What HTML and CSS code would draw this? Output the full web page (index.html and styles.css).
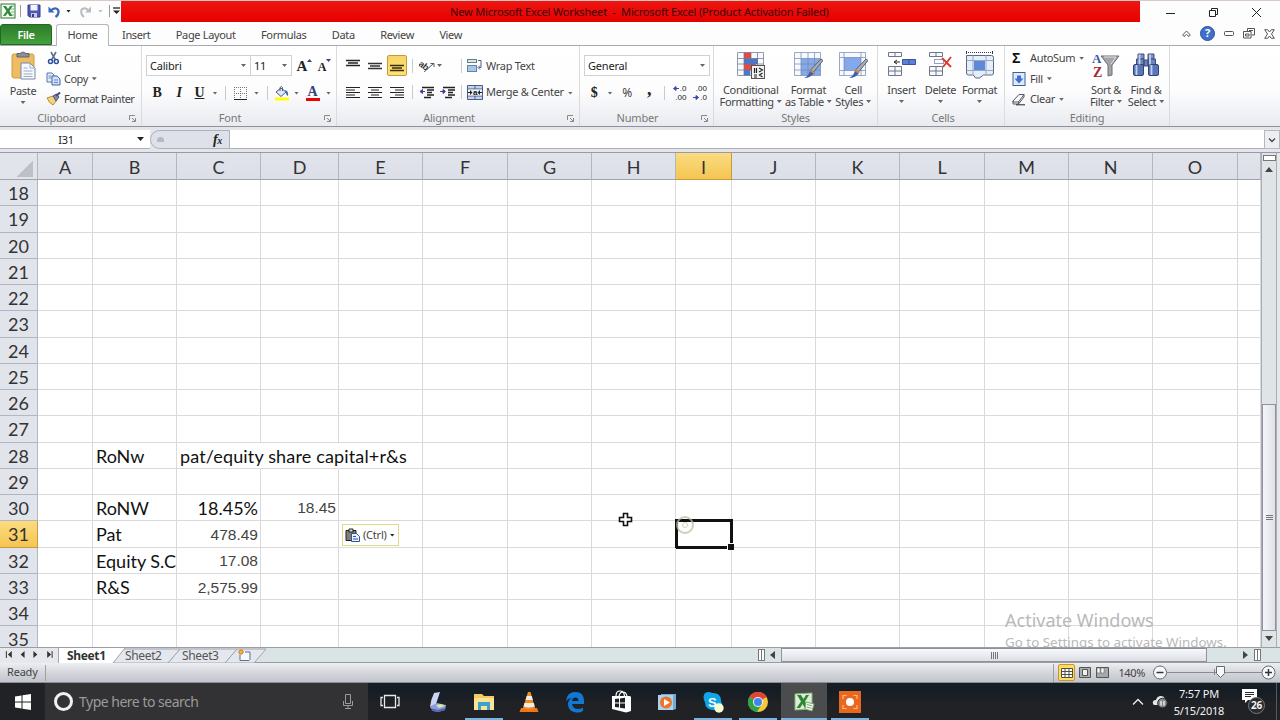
FILE: index.html
```html
<!DOCTYPE html>
<html lang="en">
<head>
    <meta charset="UTF-8">
    <meta name="viewport" content="width=device-width, initial-scale=1.0">
    <title>New Microsoft Excel Worksheet - Microsoft Excel</title>
    <link rel="stylesheet" href="styles.css">
</head>
<body>
    <header class="titlebar">
        <div class="quick-access">
            <svg class="qa-excel" width="16" height="16" viewBox="0 0 16 16"><rect x="1" y="1" width="14" height="14" fill="#f4faf2" stroke="#2c7a35"/><path d="M11 3h3M11 6h3M11 9h3M11 12h3" stroke="#7cb87e"/><path d="M3 3h3l2 3 2-3h2.500L9.500 8l3 5h-3L7.700 10 5.500 13H3l3.500-5z" fill="#2e8b37"/></svg>
            <i class="vline"></i>
            <svg width="14" height="14" viewBox="0 0 14 14"><path d="M1 1h12v12H2.500L1 11.500z" fill="#4d55b5" stroke="#363c8e"/><path d="M3.500 1h7v5.500h-7z" fill="#f2f4fc"/><path d="M4 9h6v4H4z" fill="#c9cbe6"/><path d="M5 10h2v3H5z" fill="#333a80"/></svg>
            <svg class="qa-undo" width="13" height="13" viewBox="0 0 13 13"><path d="M3 5.500C6 2 11 3 10.500 7.500 10.300 9.500 9 11 7.500 12" fill="none" stroke="#3b68bd" stroke-width="2.300"/><path d="M.5 1.500v6h6z" fill="#3b68bd"/></svg>
            <i class="arr dark"></i>
            <svg class="qa-redo" width="13" height="13" viewBox="0 0 13 13"><path d="M9.500 5.500C6 2 2 3 2.200 7 2.300 9.500 3.500 11 5 12" fill="none" stroke="#b9bbc0" stroke-width="2"/><path d="M12 1.500v6H6z" fill="#b9bbc0"/></svg>
            <i class="arr pale"></i>
            <i class="vline"></i>
            <svg width="7" height="8" viewBox="0 0 7 8"><path d="M0 1h7" stroke="#222" stroke-width="1.300"/><path d="M0 3.500h7L3.500 7z" fill="#222"/></svg>
        </div>
        <div class="caption">New Microsoft Excel Worksheet &nbsp;-&nbsp; Microsoft Excel (Product Activation Failed)</div>
        <div class="window-buttons">
            <svg width="11" height="11" viewBox="0 0 11 11"><path d="M1 6.500h9" stroke="#222"/></svg>
            <svg width="11" height="11" viewBox="0 0 11 11"><path d="M1.500 3.500h6v6h-6zM3.500 3V1.500h6v6H8" fill="none" stroke="#222"/></svg>
            <svg width="11" height="11" viewBox="0 0 11 11"><path d="M1 1l9 9M10 1l-9 9" stroke="#222"/></svg>
        </div>
    </header>

    <nav class="tabs">
        <span class="tab file">File</span>
        <span class="tab home">Home</span>
        <span class="tab">Insert</span>
        <span class="tab">Page Layout</span>
        <span class="tab">Formulas</span>
        <span class="tab">Data</span>
        <span class="tab">Review</span>
        <span class="tab">View</span>
        <div class="tab-tools">
            <svg width="9" height="8" viewBox="0 0 9 8"><path d="M.7 5L4.500 1 8.300 5 7 6.500 4.500 4.500 2 6.500z" fill="#fff" stroke="#555"/></svg>
            <div class="help">?</div>
            <svg width="10" height="5" viewBox="0 0 10 5"><rect x=".5" y=".5" width="9" height="4" rx="1" fill="#fff" stroke="#555"/></svg>
            <svg width="12" height="11" viewBox="0 0 12 11"><path d="M4.500 3V.500h7v6.500H8.500" fill="none" stroke="#555"/><path d="M6 2.500h4M.500 3.500h7.500v6.500H.500zM2.500 6h3.500v2H2.500z" fill="none" stroke="#555"/></svg>
            <svg width="11" height="10" viewBox="0 0 11 10"><path d="M.7.700h3L5.500 3 7.300.700h3L7.500 5l2.800 4.300h-3L5.500 7 3.700 9.300h-3L3.500 5z" fill="#fff" stroke="#555"/></svg>
        </div>
    </nav>

    <section class="ribbon">
        <div class="group clipboard">
            <div class="group-body">
                <div class="big paste">
                    <svg width="25" height="29" viewBox="0 0 25 29"><rect x="1" y="3" width="22" height="24" rx="2" fill="#eebd63" stroke="#d09a3f"/><path d="M6 2.500h3Q12-.500 15 2.500h3V6H6z" fill="#8c8f98" stroke="#62656d"/><path d="M10 12h9l5 5v11H10z" fill="#f6f9fe" stroke="#7988a8"/><path d="M19 12v5h5M12.500 17h4M12.500 20h9M12.500 23h9M12.500 25.500h9" fill="none" stroke="#9aabc9"/></svg>
                    <span>Paste</span><i class="arr"></i>
                </div>
                <div class="stack">
                    <div><svg width="15" height="14" viewBox="0 0 15 14"><path d="M5 1l4.500 8M10 1L5.500 9" stroke="#5c6f96" stroke-width="1.600"/><circle cx="4.500" cy="10.500" r="2" fill="none" stroke="#2c4e9c" stroke-width="1.500"/><circle cx="10.300" cy="10.500" r="2" fill="none" stroke="#2c4e9c" stroke-width="1.500"/></svg>Cut</div>
                    <div><svg width="15" height="14" viewBox="0 0 15 14"><path d="M1 1h5l2 2v7H1z" fill="#e6effc" stroke="#5375b5"/><path d="M6 4h5l3 3v6H6z" fill="#d4e3fa" stroke="#3f62a8"/><path d="M2.500 4h3M2.500 6h3M8 8h4M8 10.500h4" stroke="#6487c4"/></svg>Copy<i class="arr"></i></div>
                    <div><svg width="15" height="14" viewBox="0 0 15 14"><path d="M1 6l6-2 4 4-4 5q-4-2-6-7z" fill="#f2d57d" stroke="#b78b38"/><path d="M7 4l3 5 3-4-2.500-3z" fill="#8890a8" stroke="#4b5370"/><path d="M10 4l4-3.500" stroke="#414b7a" stroke-width="2"/></svg>Format Painter</div>
                </div>
            </div>
            <div class="group-name">Clipboard<svg class="launcher" width="7" height="7" viewBox="0 0 7 7"><path d="M.5 5V.500H6M3 3l3 3M6.500 3v3.500H3" fill="none" stroke="#888"/></svg></div>
        </div>

        <div class="group font">
            <div class="group-body rows">
                <div class="line1">
                    <div class="combo">Calibri<i class="arr"></i></div>
                    <div class="combo size">11<i class="arr"></i></div>
                    <div class="serif grow">A<svg width="5" height="4" viewBox="0 0 5 4"><path d="M0 3h5L2.500 0z" fill="#34427a"/></svg></div>
                    <div class="serif shrink">A<svg width="5" height="4" viewBox="0 0 5 4"><path d="M0 0h5L2.500 3z" fill="#34427a"/></svg></div>
                </div>
                <div class="line2">
                    <b class="serif">B</b><b class="serif italic">I</b><b class="serif under">U</b><i class="arr"></i><i class="vline"></i>
                    <svg width="13" height="13" viewBox="0 0 13 13"><path d="M.5 0v12M6.500 0v12M12.500 0v12M0 .500h13M0 6.500h13" stroke="#777" stroke-dasharray="1 1"/><path d="M0 12.500h13" stroke="#222"/></svg>
                    <i class="arr"></i><i class="vline"></i>
                    <svg width="16" height="15" viewBox="0 0 16 15"><path d="M2 6l5-4 5 4-5 4.500z" fill="#dfe8f5" stroke="#4a5a80"/><path d="M6 5V1.500q1.500-2 2.500 0V5" fill="none" stroke="#4a5a80"/><path d="M11 4q4 1 3 6-2-1-2.500-4z" fill="#3f6bbd"/><path d="M1 11.500h14v3H1z" fill="#ff0"/></svg>
                    <i class="arr"></i>
                    <div class="fontcolor serif">A</div>
                    <i class="arr"></i>
                </div>
            </div>
            <div class="group-name">Font<svg class="launcher" width="7" height="7" viewBox="0 0 7 7"><path d="M.5 5V.500H6M3 3l3 3M6.500 3v3.500H3" fill="none" stroke="#888"/></svg></div>
        </div>

        <div class="group alignment">
            <div class="group-body rows">
                <div class="line">
                    <svg width="14" height="13" viewBox="0 0 14 13"><path d="M0 1.500h14M2 4h10M0 6.500h14" stroke="#222" stroke-width="1.300"/></svg>
                    <svg width="14" height="13" viewBox="0 0 14 13"><path d="M0 4.500h14M2 7h10M0 9.500h14" stroke="#333" stroke-width="1.300"/></svg>
                    <div class="pressed"><svg width="14" height="13" viewBox="0 0 14 13"><path d="M0 6.500h14M2 9h10M0 11.500h14" stroke="#3b2f0a" stroke-width="1.400"/></svg></div>
                    <i class="vline"></i>
                    <svg width="16" height="14" viewBox="0 0 16 14"><text x="0" y="9" transform="rotate(38 4 6)" class="ab">ab</text><path d="M5 13l9-8M11.500 4.500H15V8" fill="none" stroke="#555"/></svg>
                    <i class="arr left"></i>
                    <i class="vline"></i>
                    <svg width="16" height="15" viewBox="0 0 16 15"><rect x=".5" y="1.500" width="9" height="3" fill="#dbe5ef" stroke="#687c88"/><path d="M11 2.500h3v7h-2M13 7.500l-2 2 2 2" fill="none" stroke="#49608c"/><rect x=".5" y="7.500" width="9" height="6" fill="#a9c8e8" stroke="#6384a5"/></svg>
                    <span>Wrap Text</span>
                </div>
                <div class="line">
                    <svg width="14" height="13" viewBox="0 0 14 13"><path d="M0 1.500h14M0 4h9M0 6.500h14M0 9h9M0 11.500h14" stroke="#222" stroke-width="1.200"/></svg>
                    <svg width="14" height="13" viewBox="0 0 14 13"><path d="M0 1.500h14M3 4h8M0 6.500h14M3 9h8M0 11.500h14" stroke="#222" stroke-width="1.200"/></svg>
                    <svg width="14" height="13" viewBox="0 0 14 13"><path d="M0 1.500h14M5 4h9M0 6.500h14M5 9h9M0 11.500h14" stroke="#222" stroke-width="1.200"/></svg>
                    <i class="vline"></i>
                    <svg width="15" height="13" viewBox="0 0 15 13"><path d="M3 1.500h12M8 4h7M8 6.500h5M8 9h7M5 11.500h7" stroke="#222" stroke-width="1.300"/><path d="M6 5.500H2M3.500 3.500L1 5.500l2.500 2z" stroke="#3f3f9e" fill="#3f3f9e"/></svg>
                    <svg width="15" height="13" viewBox="0 0 15 13"><path d="M3 1.500h12M8 4h7M8 6.500h5M8 9h7M5 11.500h7" stroke="#222" stroke-width="1.300"/><path d="M0 5.500h4M3 3.500l2.500 2-2.500 2z" stroke="#3f3f9e" fill="#3f3f9e"/></svg>
                    <i class="vline"></i>
                    <svg width="16" height="15" viewBox="0 0 16 15"><path d="M.5.500h15v14H.500zM8 .500V4M8 11v3.500M.500 4h15M.500 11h15" fill="#c4d4ee" stroke="#4a5d86"/><path d="M1 4.500h14v6H1z" fill="#eef3fb"/><path d="M1 7.500h3.500M15 7.500h-3.500" stroke="#222"/><path d="M3 5l2.500 2.500L3 10zM13 5l-2.500 2.500L13 10z" fill="#222"/><text x="6" y="10" class="tiny-a">a</text></svg>
                    <span>Merge &amp; Center<i class="arr"></i></span>
                </div>
            </div>
            <div class="group-name">Alignment<svg class="launcher" width="7" height="7" viewBox="0 0 7 7"><path d="M.5 5V.500H6M3 3l3 3M6.500 3v3.500H3" fill="none" stroke="#888"/></svg></div>
        </div>

        <div class="group number">
            <div class="group-body rows">
                <div class="combo">General<i class="arr"></i></div>
                <div class="line">
                    <b class="serif">$</b><i class="arr"></i><span class="pct">%</span><b class="serif comma">,</b><i class="vline"></i>
                    <div class="dec"><span><svg width="6" height="5" viewBox="0 0 6 5"><path d="M6 2.500H2M3 .500L.500 2.500 3 4.500z" fill="#3b48a8" stroke="#3b48a8"/></svg>.0</span><span>.00</span></div>
                    <div class="dec"><span>.00</span><span><svg width="6" height="5" viewBox="0 0 6 5"><path d="M0 2.500h4M3 .500l2.500 2L3 4.500z" fill="#3b48a8" stroke="#3b48a8"/></svg>.0</span></div>
                </div>
            </div>
            <div class="group-name">Number<svg class="launcher" width="7" height="7" viewBox="0 0 7 7"><path d="M.5 5V.500H6M3 3l3 3M6.500 3v3.500H3" fill="none" stroke="#888"/></svg></div>
        </div>

        <div class="group styles">
            <div class="group-body">
                <div class="big w71">
                    <svg width="29" height="28" viewBox="0 0 29 28"><path d="M1.500 1.500h26v23h-26z" fill="#f7f9fd"/><path d="M8 1.500h7v6H8zM8 13h12v6H8z" fill="#e8493c"/><path d="M8 7.500h14V13H8z" fill="#4f74cc"/><path d="M8 19h6v5.500H8z" fill="#4f74cc"/><path d="M1.500 1.500h26v23h-26zM8 1.500v23M15 1.500v23M21.500 1.500v23M1.500 7.500h26M1.500 13h26M1.500 19h26" fill="none" stroke="#67738c" stroke-opacity=".7"/><rect x="15.500" y="14.500" width="13" height="13" fill="#f4f4f4" stroke="#555"/><path d="M18 24h3M18 26h3M18.500 17v5M20.500 17v5M23 17l3.500 2-3.500 2M26.500 22l-3 2 3 2" fill="none" stroke="#222" stroke-width="1.200"/></svg>
                    <span>Conditional</span><span>Formatting<i class="arr"></i></span>
                </div>
                <div class="big w44">
                    <svg width="30" height="28" viewBox="0 0 30 28"><path d="M1.500 1.500h26v23h-26z" fill="#f7f9fd"/><path d="M8 7.500h19.500v17H8z" fill="#86a9e8"/><path d="M1.500 1.500h26v23h-26zM8 1.500v23M15 1.500v23M21.500 1.500v23M1.500 7.500h26M1.500 13h26M1.500 19h26" fill="none" stroke="#7188b2" stroke-opacity=".7"/><path d="M28 8l2 1.500L20.500 21l-3-2z" fill="#a9adb8" stroke="#596070"/><path d="M17 19l4 3q-3 5-10 5 5-2 6-8z" fill="#3a62b3"/><path d="M17 19l4 3" stroke="#c98a3a" stroke-width="2"/></svg>
                    <span>Format</span><span>as Table<i class="arr"></i></span>
                </div>
                <div class="big w48">
                    <svg width="30" height="28" viewBox="0 0 30 28"><path d="M1.500 1.500h26v23h-26z" fill="#f7f9fd"/><path d="M6 6.500h17v13H6z" fill="#84a8ec"/><path d="M1.500 1.500h26v23h-26zM6 1.500v23M23 1.500v23M1.500 6.500h26M1.500 19.500h26" fill="none" stroke="#7188b2" stroke-opacity=".7"/><path d="M28 8l2 1.500L20.500 21l-3-2z" fill="#a9adb8" stroke="#596070"/><path d="M17 19l4 3q-3 5-10 5 5-2 6-8z" fill="#3a62b3"/><path d="M17 19l4 3" stroke="#c98a3a" stroke-width="2"/></svg>
                    <span>Cell</span><span>Styles<i class="arr"></i></span>
                </div>
            </div>
            <div class="group-name">Styles</div>
        </div>

        <div class="group cells">
            <div class="group-body">
                <div class="big w39">
                    <svg width="29" height="28" viewBox="0 0 29 28"><path d="M1.500 1.500h13v4h-13zM8 1.500v4M1.500 15.500h13v9h-13zM8 15.500v9M1.500 20h13" fill="#f7f9fd" stroke="#6d7788"/><path d="M15.500 8.500h13v5h-13zM22 8.500v5" fill="#5c80d8" stroke="#3c539a"/><path d="M13 11H8M10 9l-3 2 3 2" fill="none" stroke="#222"/></svg>
                    <span>Insert</span><i class="arr"></i>
                </div>
                <div class="big w39">
                    <svg width="25" height="28" viewBox="0 0 25 28"><path d="M1.500 1.500h13v4h-13zM8 1.500v4M1.500 15.500h13v9h-13zM8 15.500v9M1.500 20h13" fill="#f7f9fd" stroke="#6d7788"/><path d="M6.500 8.500h9v4h-9z" fill="none" stroke="#333f88" stroke-dasharray="1 1"/><path d="M14 7l9 9M23 6l-8 10" stroke="#e33a35" stroke-width="2"/></svg>
                    <span>Delete</span><i class="arr"></i>
                </div>
                <div class="big w39">
                    <svg width="29" height="28" viewBox="0 0 29 28"><path d="M1 1.500h27" stroke="#334" stroke-dasharray="1 1"/><path d="M1.500 0v3M27.500 0v3" stroke="#334"/><path d="M1.500 4.500h25q2 0 2 2V22q0 2-2 2h-8l-4 3h-4l-2-3h-5q-2 0-2-2z" fill="#e4edfa" stroke="#5a6a83"/><path d="M8 4.500v19M21 4.500v19M1.500 9.500h27M1.500 19.500h27" stroke="#9aa8bd"/><path d="M9 10h11v9H9z" fill="#5d89dd"/></svg>
                    <span>Format</span><i class="arr"></i>
                </div>
            </div>
            <div class="group-name">Cells</div>
        </div>

        <div class="group editing">
            <div class="group-body">
                <div class="stack">
                    <div><b class="sigma">&Sigma;</b>AutoSum<i class="arr"></i></div>
                    <div><svg width="13" height="14" viewBox="0 0 13 14"><rect x=".5" y=".5" width="12" height="13" fill="#dfeafa" stroke="#45608f"/><path d="M4.500 3.500h4v3h2.500l-4.500 5-4.500-5h2.500z" fill="#3d6fd6"/></svg>Fill<i class="arr"></i></div>
                    <div><svg width="14" height="13" viewBox="0 0 14 13"><path d="M1 8l6-6.500h5L6.500 9H1zM1 8v3h5.500L12 4V1.500M6.500 9v2" fill="#f3f3f8" stroke="#565b6a"/><path d="M4 11.800h9" stroke="#222"/></svg>Clear<i class="arr"></i></div>
                </div>
                <div class="big sort">
                    <svg width="28" height="28" viewBox="0 0 28 28"><path d="M9 5h18l-7 9v10l-4 1V14z" fill="#a3a5aa" stroke="#6c6e73"/><path d="M12 6h12l-5 7" fill="none" stroke="#e2e3e5"/><text x="0" y="12" class="sort-a">A</text><text x="1" y="26" class="sort-z">Z</text></svg>
                    <span>Sort &amp;</span><span>Filter<i class="arr"></i></span>
                </div>
                <div class="big find">
                    <svg width="28" height="28" viewBox="0 0 28 28"><path d="M6 3h6v5H6zM16 3h6v5h-6z" fill="#7d93c3" stroke="#3c4c78"/><path d="M4.500 8h7.500v6H4.500zM16 8h7.500v6H16zM12 9h4v6h-4z" fill="#6b84bb" stroke="#3c4c78"/><rect x="1.500" y="13.500" width="10" height="11" rx="1.500" fill="#5877b8" stroke="#33436f"/><rect x="16.500" y="13.500" width="10" height="11" rx="1.500" fill="#5877b8" stroke="#33436f"/><path d="M4.500 14v10M19.500 14v10M7.500 3.500v10M18 3.500v10" stroke="#c3d1ef" stroke-width="1.800"/></svg>
                    <span>Find &amp;</span><span>Select<i class="arr"></i></span>
                </div>
            </div>
            <div class="group-name">Editing</div>
        </div>
    </section>

    <div class="formula-bar">
        <div class="name-box"><span>I31</span><i class="arr dark"></i></div>
        <div class="fx"><i class="knob"></i><b>f<small>x</small></b></div>
        <div class="formula-input"></div>
        <div class="expand"><svg width="8" height="6" viewBox="0 0 8 6"><path d="M1 1.500l3 3 3-3" fill="none" stroke="#444" stroke-width="1.300"/></svg></div>
    </div>

    <main class="workspace">
        <div class="sheet" id="sheet"></div>
        <div class="vscroll">
            <div class="split"></div>
            <i class="tri up"></i>
            <div class="vtrack"></div>
            <div class="vthumb"><i></i><i></i><i></i></div>
            <i class="tri down"></i>
        </div>
        <div class="edge"></div>

        <div class="paste-options">
            <svg width="15" height="14" viewBox="0 0 15 14"><path d="M1 2.500h10v10H1z" fill="#7f7f72" stroke="#222"/><path d="M4 1h4v3H4z" fill="#ddd" stroke="#222"/><path d="M6.500 5.500h5l3 3v5h-8z" fill="#e7effd" stroke="#2f55a4"/><path d="M8 8.500h3M8 11h5" stroke="#2f55a4"/></svg>
            (Ctrl)<i class="arr dark"></i>
        </div>
        <svg class="pointer" width="16" height="16" viewBox="0 0 16 16"><path d="M5.500 1.500h4v4h4v4h-4v4h-4v-4h-4v-4h4z" fill="#fff" stroke="#111" stroke-width="1.600"/></svg>
        <div class="click-ring"><i></i></div>
        <div class="watermark">
            <p class="wm-title">Activate Windows</p>
            <p class="wm-text">Go to Settings to activate Windows.</p>
        </div>
    </main>

    <div class="sheet-tabs">
        <svg class="nav-arrows" width="59" height="15" viewBox="0 0 59 15"><path d="M6.500 3v7M53 3v7" stroke="#333"/><path d="M12 3v7L8 6.500zM25 3v7l-4-3.500zM34 3v7l4-3.500zM48 3v7l4-3.500z" fill="#333"/></svg>
        <svg class="tab-shapes" width="210" height="16" viewBox="0 0 210 16"><path d="M166 15l12-14h29l-12 14z" fill="#e4e7ee" stroke="#a2a6b0"/><path d="M109 15l12-14h57l-12 14z" fill="#e4e7ee" stroke="#a2a6b0"/><path d="M53 15L65 1h56l-12 14z" fill="#e4e7ee" stroke="#a2a6b0"/><path d="M0 0h66L54 15H0z" fill="#fff"/><path d="M66 0L54 15" stroke="#a2a6b0"/><text x="8" y="12" class="st active">Sheet1</text><text x="66" y="12" class="st">Sheet2</text><text x="123" y="12" class="st">Sheet3</text><path d="M181 6.500v6h9l1-1V4h-5" fill="#f7f8fc" stroke="#5f6d9b"/><circle cx="182" cy="4" r="2.200" fill="#f6b53c" stroke="#d07d22"/></svg>
        <div class="tabs-fill"></div>
        <div class="split-v"></div>
        <div class="hscroll">
            <i class="tri lft"></i>
            <div class="hthumb"><i></i><i></i><i></i><i></i></div>
            <div class="htrack"></div>
            <i class="tri rgt"></i>
        </div>
        <div class="split-v"></div>
        <div class="corner"></div>
    </div>

    <div class="status-bar">
        <span class="ready">Ready</span>
        <div class="view-buttons">
            <div class="view on"><svg width="12" height="10" viewBox="0 0 12 10"><path d="M.5.500h11v9H.500zM4 0v10M8 0v10M0 3.500h12M0 6.500h12" fill="#fff" stroke="#54503f"/></svg></div>
            <div class="view"><svg width="12" height="11" viewBox="0 0 12 11"><path d="M.5.500h11v10H.500z" fill="#aab1ac" stroke="#555"/><path d="M3.500 2.500h5v6h-5z" fill="#f0f3ee" stroke="#555"/></svg></div>
            <div class="view"><svg width="13" height="11" viewBox="0 0 13 11"><path d="M.5.500h12v10H.500z" fill="#a6a8ab" stroke="#555"/><path d="M1 1h3v5H1zM5 1h3v5H5z" fill="#fff" stroke="#666" stroke-width=".6"/></svg></div>
        </div>
        <span class="zoom-value">140%</span>
        <svg class="zoom-slider" width="125" height="18" viewBox="0 0 125 18"><path d="M15 8.500h95" stroke="#878b96"/><path d="M62.500 5v6" stroke="#878b96"/><circle cx="8" cy="8.500" r="6.500" fill="#f7f8fa" stroke="#666a75"/><circle cx="116.500" cy="8.500" r="6.500" fill="#f7f8fa" stroke="#666a75"/><path d="M4.500 8.500h7M113 8.500h7M116.500 5v7" stroke="#333" stroke-width="1.500"/><path d="M64.500 2.500h8v7l-4 4-4-4z" fill="#f7f8fa" stroke="#666a75"/></svg>
    </div>

    <footer class="taskbar">
        <div class="start"><svg width="16" height="16" viewBox="0 0 16 16"><path d="M0 2.500l6.500-1v6H0zM7.500 1.300L16 0v7.500H7.500zM0 8.500h6.500v6l-6.500-1zM7.500 8.500H16V16l-8.500-1.300z" fill="#fff"/></svg></div>
        <div class="search">
            <i class="cortana"></i><span>Type here to search</span>
            <svg width="12" height="17" viewBox="0 0 12 17"><path d="M3.500 1.500h5v9h-5zM1.500 8v4.500h9V8M6 12.500V16M3 15.500h6" fill="none" stroke="#9b9b9b"/></svg>
        </div>
        <div class="task view-task"><svg width="20" height="16" viewBox="0 0 20 16"><path d="M4.500 1.500h11v12h-11zM3 3.500H1v8h2M17 3.500h2v8h-2" fill="none" stroke="#e8e8e8" stroke-width="1.300"/></svg></div>
        <div class="task"><svg width="20" height="22" viewBox="0 0 20 22"><path d="M6 2l6-1-4 12-6 3q1-8 4-14z" fill="#c9d5f3"/><path d="M2 16l7-4 9 2-1 5-7 2-5-1z" fill="#8b9fdf"/><path d="M8 14l5-1 4 2-6 2z" fill="#dbe6a8"/><path d="M4 18.500l6 1.500 7-2" fill="none" stroke="#5368b3" stroke-width="2"/></svg></div>
        <div class="task run"><svg width="20" height="18" viewBox="0 0 20 18"><path d="M0 1h8l2 2h10v14H0z" fill="#f1ca62"/><path d="M0 5h20v12H0z" fill="#fae491"/><path d="M4 17V9h12v8h-3v-4H7v4z" fill="#3aa2d2"/></svg></div>
        <div class="task"><svg width="20" height="22" viewBox="0 0 20 22"><path d="M2 17h16l1.500 4H.500z" fill="#ef7814"/><path d="M9 1h2.500L16 17q-5.500 3-12 0z" fill="#f78b1c"/><path d="M7.800 5h5l1 4H6.500zM5.500 12h9.300l1 3.500q-6 2-11.300 0z" fill="#eee"/></svg></div>
        <div class="task"><svg width="20" height="22" viewBox="0 0 20 22"><path d="M1 10Q2 1 10.500 1 19 1 19 10v3H7q1 5 6 5 3 0 5-1.500V20q-3 2-7 1.500-8-1-8-8.500 0-4 4.500-6.500Q3.500 7 1 10zm6-0h6.500q0-3.500-3-3.500T7 10z" fill="#1179d4"/></svg></div>
        <div class="task"><svg width="21" height="23" viewBox="0 0 21 23"><path d="M5 6q0-5 4-5t4.500 5M8 6q1-4 4-4t4 4" fill="none" stroke="#fff" stroke-width="1.200"/><path d="M1 6h18l1 1v14l-5 1.500L1 19z" fill="#fff"/><path d="M4 9l4-.5v4H4zM9 8.400l5-.6v4.700H9zM4 13.500h4v4l-4-.5zM9 13.500h5v5l-5-.8z" fill="#1f2022"/></svg></div>
        <div class="task"><svg width="20" height="20" viewBox="0 0 20 20"><path d="M4 2h15v15l-3 1H4z" fill="#75a9d4"/><path d="M1 3h15v15H1z" fill="#acd2ec"/><circle cx="9" cy="10.500" r="6" fill="#ee7328"/><path d="M7 7l6 3.500-6 3.500z" fill="#fff"/></svg></div>
        <div class="task run"><svg width="22" height="22" viewBox="0 0 22 22"><path d="M3 2q4-2 7 0 9-.5 9 8 2 4 0 8-3 3-7 1Q3 19 3 11 0 6 3 2z" fill="#10a5e8"/><text x="6" y="15.500" class="skype-s">S</text><circle cx="17" cy="17" r="4.700" fill="#f4ffd2"/></svg></div>
        <div class="task run"><svg width="22" height="22" viewBox="0 0 22 22"><circle cx="11" cy="11" r="10" fill="#f6c83a"/><path d="M11 11L2.300 6A10 10 0 0 1 19.700 6z" fill="#e04537"/><path d="M11 11L2.300 6A10 10 0 0 0 10 21l5-8z" fill="#2da34c"/><circle cx="11" cy="11" r="5" fill="#f5f5f5"/><circle cx="11" cy="11" r="4" fill="#4285e8"/></svg></div>
        <div class="task run current"><svg width="21" height="20" viewBox="0 0 21 20"><path d="M1 2l17-1v16L1 18z" fill="#dcefd4" stroke="#8bb57e"/><path d="M3 3h4l2.500 4L12 3h3l-4 6.500 4 6.500h-4l-2.500-4L6 16H2.500L7 9.500z" fill="#2c8634"/><path d="M12 10l8 2-2 7-7-2z" fill="#f4f9f0" stroke="#79a66c"/><path d="M13 12.500l5 1.300M12.500 15l5 1.300" stroke="#79a66c"/></svg></div>
        <div class="task run"><svg width="22" height="22" viewBox="0 0 22 22"><path d="M0 0h22v22H0z" fill="#e9671f"/><circle cx="11" cy="11" r="4" fill="#fff"/><path d="M4 8V4.500h3.500M14.500 4.500H18V8M4 14v3.500h3.500M14.500 17.500H18V14" fill="none" stroke="#ffb98a" stroke-width="1.200"/></svg></div>
        <div class="tray">
            <svg class="chev" width="12" height="8" viewBox="0 0 12 8"><path d="M1 6.500l5-5 5 5" fill="none" stroke="#eee" stroke-width="1.300"/></svg>
            <svg width="16" height="15" viewBox="0 0 16 15"><path d="M1 10q-1-4 3-4 1-4 5-4 3 0 4 3v6H2z" fill="#e6e6e6"/><circle cx="10.500" cy="9" r="4.800" fill="#86888b" stroke="#2a2b2e"/><path d="M9 7v4.500M12 7v4.500" stroke="#fff" stroke-width="1.200"/></svg>
            <div class="clock"><span>7:57 PM</span><span>5/15/2018</span></div>
            <div class="notify"><svg width="15" height="15" viewBox="0 0 15 15"><path d="M0 0h15v11H6l-3 3v-3H0z" fill="#fff"/><path d="M3 3.500h9M3 5.500h9M3 7.500h6" stroke="#26282c"/></svg><span class="badge">26</span></div>
            <i class="peek"></i>
        </div>
    </footer>

    <script>
    // the last column has no room for its letter
    const columns = 'ABCDEFGHIJKLMNO'.split('').concat('');
    const firstRow = 18;
    const lastRow = 35;
    const selected = { col: 'I', row: 31 };

    const values = {
        B28: ['RoNw'], C28: ['pat/equity share capital+r&s', 'wide'],
        B30: ['RoNW'], C30: ['18.45%', 'num'], D30: ['18.45', 'num arial'],
        B31: ['Pat'], C31: ['478.49', 'num arial low'],
        B32: ['Equity S.C'], C32: ['17.08', 'num arial'],
        B33: ['R&S'], C33: ['2,575.99', 'num arial low']
    };

    const sheet = document.getElementById('sheet');

    function add(className, text) {
        const el = document.createElement('div');
        el.className = className;
        if (text) {
            const span = document.createElement('span');
            span.textContent = text;
            el.appendChild(span);
        }
        sheet.appendChild(el);
    }

    add('head select-all');
    columns.forEach(col => add('head' + (col === selected.col ? ' hot' : ''), col));

    for (let row = firstRow; row <= lastRow; row++) {
        add('head row-head' + (row === selected.row ? ' hot' : ''), String(row));
        columns.forEach(col => {
            const value = values[col + row] || [];
            let className = 'cell';
            if (value[1]) className += ' ' + value[1];
            if (col === selected.col && row === selected.row) className += ' selected';
            // long text spills over the next empty cells
            if (row === 28 && (col === 'C' || col === 'D')) className += ' spill';
            add(className, value[0]);
        });
    }
    </script>
</body>
</html>
```
FILE: styles.css
```css
* {
    box-sizing: border-box;
}
body {
    margin: 0;
    width: 1280px;
    height: 720px;
    overflow: hidden;
    display: flex;
    flex-direction: column;
    background: #fff;
    color: #444;
    font-family: "Noto Sans", "Open Sans", sans-serif;
    font-size: 11px;
    letter-spacing: -0.35px;
    line-height: 12px;
    white-space: nowrap;
}
svg {
    display: block;
    flex: none;
}
.arr {
    display: inline-block;
    flex: none;
    width: 5px;
    height: 3px;
    background: #666;
    clip-path: polygon(0 0, 100% 0, 50% 100%);
}
.arr.dark {
    background: #222;
}
.arr.pale {
    background: #bbb;
}
.vline {
    width: 1px;
    height: 14px;
    background: #c9cacd;
}
.serif {
    font-family: "Liberation Serif", serif;
    color: #222;
}

/* title bar */
.titlebar {
    height: 24px;
    flex: none;
    display: flex;
    background: #fdfdfd;
    border-top: 1px solid #d9caca;
}
.quick-access {
    width: 121px;
    display: flex;
    align-items: center;
    padding-bottom: 3px;
}
.quick-access .vline {
    margin: 0 6px 0 4px;
    height: 12px;
    background: #999;
}
.quick-access .qa-undo {
    margin: 0 5px 0 7px;
}
.quick-access .qa-redo {
    margin: 0 6px 0 8px;
}
.quick-access .pale + .vline {
    margin: 0 3px 0 6px;
}
.caption {
    width: 1019px;
    height: 21px;
    padding: 5px 0 0 329px;
    background: linear-gradient(#ee1610, #e60000);
    color: #3b0808;
    letter-spacing: -0.17px;
}
.window-buttons {
    display: flex;
    gap: 32px;
    padding: 6px 0 0 25px;
}

/* ribbon tabs */
.tabs {
    height: 22px;
    flex: none;
    display: flex;
    border-bottom: 1px solid #a8aab0;
    background: #fdfdfd;
}
.tab {
    margin-right: 25.4px;
    padding-top: 5px;
}
.tab.file {
    width: 52px;
    margin-right: 4px;
    text-align: center;
    color: #fff;
    background: linear-gradient(#2c7c2a, #44a13c);
    border: 1px solid #1f6a20;
    border-radius: 3px 3px 0 0;
    padding-top: 4px;
    font-weight: 600;
}
.tab.home {
    width: 53px;
    height: 22px;
    margin-right: 13px;
    text-align: center;
    background: #fff;
    border: 1px solid #b5b7bc;
    border-bottom: 0;
    border-radius: 3px 3px 0 0;
    padding-top: 4px;
}
.tab-tools {
    margin-left: auto;
    display: flex;
    align-items: center;
    gap: 9px;
    padding: 0 5px 2px 0;
}
.help {
    width: 15px;
    height: 15px;
    border-radius: 50%;
    background: #3f6fca;
    border: 1px solid #2b529e;
    color: #fff;
    font-weight: bold;
    text-align: center;
}

/* ribbon */
.ribbon {
    height: 81px;
    flex: none;
    display: flex;
    background: linear-gradient(#fff, #fdfdfe 55%, #e9ebf0);
    border-bottom: 1px solid #8f9299;
}
.group {
    display: flex;
    flex-direction: column;
    border-right: 1px solid #d9dbdf;
}
.group-body {
    height: 66px;
    display: flex;
}
.group-name {
    position: relative;
    color: #777;
    text-align: center;
    letter-spacing: -0.2px;
}
.clipboard .group-name,
.font .group-name,
.alignment .group-name,
.number .group-name {
    padding-right: 18px;
}
.launcher {
    position: absolute;
    right: 5px;
    top: 3px;
}
.big {
    display: flex;
    flex-direction: column;
    align-items: center;
    padding-top: 5px;
}
.big svg {
    margin-bottom: 5px;
}
.big > .arr {
    margin-top: 4px;
}
.big span .arr {
    margin: 0 0 3px 3px;
}
.stack {
    padding-top: 2px;
}
.stack > div {
    height: 20.5px;
    display: flex;
    align-items: center;
}
.stack svg {
    margin-right: 3px;
}
.clipboard .stack {
    letter-spacing: -0.5px;
}
.stack .arr,
.line span .arr {
    margin-left: 4px;
}
.rows {
    flex-direction: column;
}
.combo {
    height: 21px;
    display: flex;
    align-items: center;
    justify-content: space-between;
    padding: 0 4px 0 3px;
    background: #fff;
    border: 1px solid #cfd1d5;
    color: #222;
    letter-spacing: -0.2px;
}
.clipboard {
    width: 142px;
}
.paste {
    width: 46px;
}
.font {
    width: 195px;
}
.font .rows,
.number .rows {
    padding: 9px 0 0 4px;
    gap: 7px;
}
.line1 {
    height: 21px;
    display: grid;
    grid-template-columns: 105px 41px 20px 19px;
}
.combo.size {
    border-left: 0;
}
.grow,
.shrink {
    display: flex;
    justify-content: flex-end;
    align-items: flex-start;
    font-weight: bold;
    font-size: 15px;
    line-height: 22px;
}
.shrink {
    font-size: 12px;
    line-height: 24px;
}
.grow svg,
.shrink svg {
    margin-top: 4px;
}
.line2 {
    height: 20px;
    display: grid;
    grid-template-columns: 22px 22px 19px 12px 8px 22px 11px 10px 19px 11px 21px 11px;
    align-items: center;
    justify-items: center;
}
.line2 b {
    font-size: 14px;
}
.italic {
    font-style: italic;
}
.under {
    text-decoration: underline;
}
.fontcolor {
    width: 14px;
    height: 15px;
    border-bottom: 3px solid #f00000;
    color: #34427a;
    font-weight: bold;
    font-size: 14px;
    line-height: 11px;
    text-align: center;
}
.alignment {
    width: 243px;
}
.alignment .rows {
    padding: 9px 0 0 5px;
    gap: 7px;
}
.alignment .line {
    height: 20px;
    display: grid;
    grid-template-columns: 22px 22px 22px 8px 21px 21px 6px 22px auto;
    align-items: center;
    justify-items: center;
    justify-content: start;
}
.alignment .line .left {
    justify-self: start;
}
.alignment .line span {
    justify-self: start;
    letter-spacing: -0.3px;
}
.line span .arr {
    vertical-align: middle;
}
.pressed {
    width: 20px;
    height: 21px;
    display: flex;
    align-items: center;
    justify-content: center;
    border: 1px solid #c59a35;
    border-radius: 2px;
    background: linear-gradient(#f9d567, #fbe07b);
}
.ab {
    font: bold 9px "Liberation Sans", sans-serif;
    fill: #333;
}
.tiny-a {
    font: bold 8px "Liberation Sans", sans-serif;
    fill: #111;
}
.number {
    width: 134px;
}
.number .combo {
    width: 126px;
}
.number .line {
    height: 20px;
    display: grid;
    grid-template-columns: 20px 12px 22px 22px 8px 23px 18px;
    align-items: center;
    justify-items: center;
}
.number .serif {
    font-size: 14px;
}
.number .comma {
    font-size: 18px;
    line-height: 8px;
    padding-bottom: 8px;
}
.pct {
    font-size: 12px;
}
.dec {
    display: flex;
    flex-direction: column;
    align-items: flex-end;
    font-family: "Liberation Sans", sans-serif;
    font-size: 8px;
    line-height: 9px;
    letter-spacing: 0;
    color: #222;
}
.dec span {
    display: flex;
    align-items: center;
    gap: 1px;
}
.styles {
    width: 164px;
}
.w71 {
    width: 74px;
}
.w44 {
    width: 42px;
}
.w48 {
    width: 48px;
}
.cells {
    width: 127px;
    padding-left: 4px;
}
.w39 {
    width: 39px;
}
.editing {
    width: 165px;
}
.editing .stack {
    width: 82px;
    padding-left: 7px;
}
.editing .stack svg {
    width: 14px;
    margin-right: 4px;
}
.sigma {
    width: 14px;
    margin-right: 4px;
    font-family: "Liberation Sans", sans-serif;
    font-size: 14px;
    color: #111;
}
.sort,
.find {
    width: 38px;
    margin-right: 2px;
}
.sort-a {
    font: bold 13px "Liberation Serif", serif;
    fill: #3358ad;
}
.sort-z {
    font: bold 14px "Liberation Serif", serif;
    fill: #a52630;
}

/* formula bar */
.formula-bar {
    height: 26px;
    flex: none;
    display: flex;
    padding: 3px 0;
    background: #e3e5ea;
    border-bottom: 1px solid #989ba3;
}
.name-box {
    width: 150px;
    display: flex;
    align-items: center;
    background: #fff;
    color: #222;
    border-bottom: 1px solid #aeb1b8;
}
.name-box span {
    width: 132px;
    padding-top: 1px;
    text-align: center;
}
.name-box .arr {
    width: 7px;
    height: 4px;
    margin-left: 5px;
}
.fx {
    width: 80px;
    display: flex;
    align-items: center;
    justify-content: space-between;
    padding: 0 7px 0 6px;
    border: 1px solid #aeb1b8;
    border-radius: 10px 0 0 10px;
    background: #dee1e9;
}
.knob {
    width: 7px;
    height: 5px;
    border-radius: 4px 4px 1px 0;
    background: #b6b9c2;
}
.fx b {
    font: italic bold 14px "Liberation Serif", serif;
    color: #222;
}
.fx small {
    font-size: 10px;
}
.formula-input {
    flex: 1;
    background: #fff;
    border-bottom: 1px solid #aeb1b8;
}
.expand {
    width: 16px;
    display: flex;
    align-items: center;
    justify-content: center;
    border: 1px solid #b5b8bf;
    background: #eceef2;
}

/* sheet */
.workspace {
    position: relative;
    height: 494px;
    flex: none;
    display: flex;
    overflow: hidden;
}
.sheet {
    width: 1261px;
    display: grid;
    grid-template-columns: 38px 55px 84px 84px 78px 84px 85px 84px 84px 56px 84px 84px 85px 84px 84px 85px 23px;
    grid-template-rows: 27px repeat(18, 26.25px);
    font-family: Lato, sans-serif;
    font-size: 18px;
    letter-spacing: 0;
    line-height: 26px;
    color: #111;
}
.head {
    background: linear-gradient(#e2e4ec, #dcdfe7);
    border-right: 1px solid #b3b6be;
    border-bottom: 1px solid #a0a3ab;
    text-align: center;
    color: #333;
    line-height: 28px;
}
.row-head {
    background: #e2e4ec;
    border-bottom-color: #b3b6be;
    line-height: 27px;
}
.head.hot {
    background: linear-gradient(#fbdc80, #f4c552);
    border-color: #c79a3a;
}
.select-all {
    background: linear-gradient(135deg, transparent 50%, #bcc0c9 50%) no-repeat 16px 8px / 17px 16px, #e2e4ec;
}
.cell {
    position: relative;
    border-right: 1px solid #dadada;
    border-bottom: 1px solid #dadada;
    padding: 0 2px 0 3px;
}
.num {
    text-align: right;
}
.arial {
    font-family: "Liberation Sans", sans-serif;
    font-size: 15.5px;
    color: #444;
}
.low {
    line-height: 28px;
}
.wide {
    z-index: 1;
    letter-spacing: 0.15px;
}
.spill {
    border-right-color: transparent;
}
.selected::after {
    content: "";
    position: absolute;
    inset: -2px -2px -2px -1px;
    border: 3px solid #111;
}
.selected::before {
    content: "";
    position: absolute;
    z-index: 1;
    right: -3px;
    bottom: -3px;
    width: 6px;
    height: 6px;
    background: #111;
    border: solid #fff;
    border-width: 1px 0 0 1px;
}
.paste-options {
    position: absolute;
    left: 342px;
    top: 371px;
    width: 57px;
    height: 22px;
    display: flex;
    align-items: center;
    gap: 3px;
    padding-left: 2px;
    background: #fff;
    border: 1px solid #dcdb8c;
    letter-spacing: -0.2px;
}
.pointer {
    position: absolute;
    left: 618px;
    top: 359px;
}
.click-ring {
    position: absolute;
    left: 676px;
    top: 363px;
    width: 18px;
    height: 18px;
    border: 2px solid rgba(190, 190, 160, .75);
    border-radius: 50%;
}
.click-ring i {
    display: block;
    width: 6px;
    height: 6px;
    margin: 4px;
    border: 1px solid #d3d3b8;
    border-radius: 50%;
}
.watermark {
    position: absolute;
    left: 1005px;
    top: 454px;
    color: #b9b9b9;
}
.watermark p {
    margin: 0;
}
.wm-title {
    font-size: 18px;
    line-height: 27px;
    letter-spacing: 0;
}
.wm-text {
    font-size: 13.4px;
    line-height: 16px;
    letter-spacing: 0;
}
.tri {
    flex: none;
    background: #444;
}
.tri.up,
.tri.down {
    width: 8px;
    height: 5px;
    clip-path: polygon(0 0, 100% 0, 50% 100%);
}
.tri.up {
    transform: scaleY(-1);
}
.tri.lft,
.tri.rgt {
    width: 5px;
    height: 8px;
    clip-path: polygon(0 50%, 100% 0, 100% 100%);
}
.tri.rgt {
    transform: scaleX(-1);
}
.vscroll {
    width: 15px;
    display: flex;
    flex-direction: column;
    align-items: center;
    border-left: 1px solid #a9acb4;
    background: #dfe5e7;
}
.split {
    width: 13px;
    height: 6px;
    margin: 2px 0 6px;
    background: #fff;
    border: 1px solid #777;
}
.vtrack {
    height: 232px;
}
.vthumb {
    width: 14px;
    height: 227px;
    display: flex;
    flex-direction: column;
    align-items: center;
    justify-content: center;
    gap: 1px;
    margin-bottom: 5px;
    border: 1px solid #8e929c;
    background: linear-gradient(90deg, #f5f6f9, #dfe1e8);
}
.vthumb i {
    width: 7px;
    height: 1px;
    background: #777;
}
.edge {
    width: 4px;
    background: #e5e7eb;
    border-left: 1px solid #a9acb4;
}

/* sheet tabs */
.sheet-tabs {
    height: 16px;
    flex: none;
    display: flex;
    background: #dbe4e5;
    border-top: 1px solid #9a9da5;
    border-bottom: 1px solid #9a9da5;
}
.nav-arrows {
    background: #e6e8ed;
    border-right: 1px solid #a2a6b0;
}
.st {
    font: 12px "Noto Sans", sans-serif;
    fill: #555;
}
.st.active {
    font-weight: bold;
    fill: #333;
}
.tabs-fill {
    flex: 1;
}
.split-v {
    width: 7px;
    margin: 1px 0;
    background: linear-gradient(90deg, transparent 2px, #777 2px, #777 3px, transparent 3px) #fff;
    border: 1px solid #777;
}
.hscroll {
    width: 489px;
    display: flex;
    align-items: center;
    padding-left: 5px;
}
.hthumb {
    width: 426px;
    height: 14px;
    margin-left: 6px;
    display: flex;
    align-items: center;
    justify-content: center;
    gap: 1px;
    border: 1px solid #8e929c;
    background: linear-gradient(#f8f9fb, #dddfe6);
}
.hthumb i {
    width: 1px;
    height: 7px;
    background: #777;
}
.htrack {
    width: 36px;
}
.corner {
    width: 19px;
}

/* status bar */
.status-bar {
    height: 20px;
    flex: none;
    display: flex;
    align-items: center;
    background: linear-gradient(#eceef1, #d2d4da 55%, #c3c5cd);
    border-bottom: 1px solid #8b8e96;
}
.ready {
    width: 46px;
    height: 16px;
    padding: 1px 0 0 7px;
    border-right: 1px solid #9da0a8;
    letter-spacing: -0.2px;
}
.view-buttons {
    display: flex;
    align-items: center;
    gap: 1px;
    height: 18px;
    margin-left: auto;
    padding-left: 4px;
    border-left: 1px solid #9da0a8;
}
.view {
    width: 17px;
    height: 17px;
    display: flex;
    align-items: center;
    justify-content: center;
}
.view.on {
    background: #fbdc68;
    border: 1px solid #c99728;
    border-radius: 2px;
}
.zoom-value {
    width: 34px;
    text-align: right;
}
.zoom-slider {
    margin: 0 3px 0 7px;
}

/* windows taskbar */
.taskbar {
    height: 37px;
    flex: none;
    display: flex;
    background: linear-gradient(#151d25 20%, #212225 60%);
}
.start {
    width: 45px;
    display: flex;
    align-items: center;
    justify-content: center;
    background: #202225;
}
.search {
    width: 323px;
    display: flex;
    align-items: center;
    padding: 0 14px 0 9px;
    background: #323235;
    color: #9a9a9a;
    font-size: 14px;
    letter-spacing: -0.5px;
}
.cortana {
    width: 19px;
    height: 19px;
    margin-right: 6px;
    border: 3px solid #f1f1f1;
    border-radius: 50%;
}
.search svg {
    margin-left: auto;
}
.task {
    width: 45.8px;
    display: flex;
    align-items: center;
    justify-content: center;
}
.view-task {
    width: 47px;
    padding-right: 4px;
}
.run {
    background: linear-gradient(#79b5e3, #79b5e3) no-repeat center bottom / 38px 2px;
}
.current {
    background: linear-gradient(#79b5e3, #79b5e3) no-repeat center bottom / 46px 2px, #4b4c4e;
}
.tray {
    margin-left: auto;
    display: flex;
    align-items: center;
    color: #f2f2f2;
    letter-spacing: -0.2px;
}
.chev {
    margin-right: 8px;
}
.clock {
    width: 62px;
    display: flex;
    flex-direction: column;
    align-items: center;
    line-height: 17px;
}
.notify {
    position: relative;
    width: 34px;
    height: 25px;
    margin-left: 12px;
}
.badge {
    position: absolute;
    left: 6px;
    top: 8px;
    width: 17px;
    height: 17px;
    border-radius: 50%;
    border: 1px solid #777;
    background: #2a2b2e;
    font-size: 10px;
    font-weight: bold;
    line-height: 15px;
    text-align: center;
}
.peek {
    width: 4px;
    height: 37px;
    border-left: 1px solid #55585c;
}
.skype-s {
    font: bold 13px "Liberation Sans", sans-serif;
    fill: #fff;
}
```
